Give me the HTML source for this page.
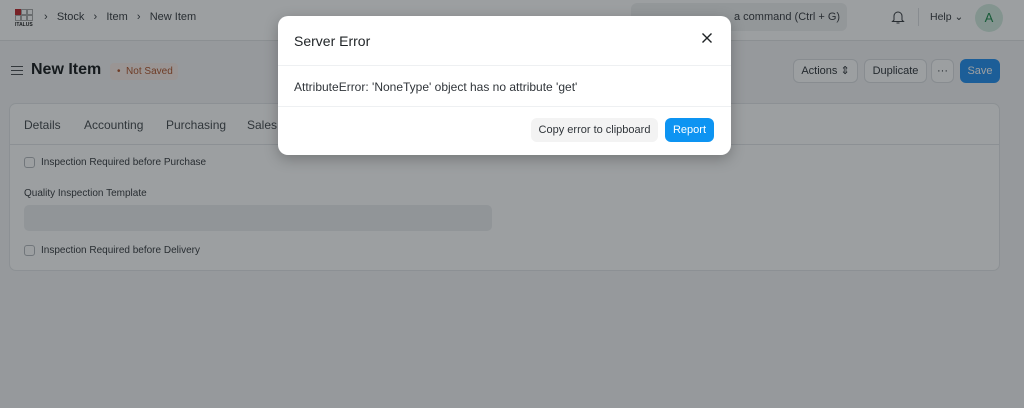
<!DOCTYPE html>
<html><head><meta charset="utf-8"><style>
*{box-sizing:border-box;margin:0;padding:0}
html,body{width:1024px;height:408px;overflow:hidden}
body{background:#f4f5f6;font-family:"Liberation Sans",sans-serif;position:relative;color:#1f2326}
.nav{position:absolute;left:0;top:0;width:1024px;height:41px;border-bottom:1px solid #e2e4e6;background:#fff}
.abs{position:absolute;white-space:nowrap}
.crumb{font-size:11px;color:#383c40;top:11px}
.search{left:631px;top:3px;width:216px;height:28px;background:#f0f1f2;border-radius:6px}
.btn{position:absolute;top:59px;height:24px;border:1px solid #dcdfe2;border-radius:6px;background:#fff;font-size:11px;color:#30353a;text-align:center;line-height:22px}
.card{position:absolute;left:9px;top:103px;width:991px;height:168px;background:#fff;border:1px solid #e4e6e8;border-radius:7px}
.tab{font-size:12px;color:#454a4f;top:118px}
.cb{position:absolute;width:11px;height:11px;border:1px solid #b5b9bd;border-radius:3px}
.lbl{font-size:10px;color:#383c40}
.ov{position:absolute;left:0;top:0;width:1024px;height:408px;background:rgba(20,26,32,0.42)}
.modal{position:absolute;left:278px;top:16px;width:453px;height:139px;background:#fff;border-radius:10px;box-shadow:0 4px 14px rgba(0,0,0,.25)}
</style></head><body>
<div class="nav"></div>
<div class="abs" style="left:15px;top:9px;width:18px;height:12px;display:grid;grid-template-columns:6px 6px 6px;grid-template-rows:6px 6px;">
<div style="background:#c0262b"></div><div style="border:1px solid #aaa"></div><div style="border:1px solid #aaa"></div><div style="border:1px solid #aaa"></div><div style="border:1px solid #aaa"></div><div style="border:1px solid #aaa"></div></div>
<div class="abs" style="left:15px;top:22px;font-size:5px;font-weight:bold;color:#222">ITALUS</div>
<div class="abs crumb" style="left:44px">›&nbsp;&nbsp; Stock &nbsp;&nbsp;›&nbsp;&nbsp; Item &nbsp;&nbsp;›&nbsp;&nbsp; New Item</div>
<div class="abs search"></div>
<div class="abs" style="left:734px;top:11px;font-size:11px;color:#383c40">a command (Ctrl + G)</div>
<svg class="abs" style="left:891px;top:9px" width="14" height="16" viewBox="0 0 14 16"><path d="M3 11V7a4 4 0 0 1 8 0v4l1.5 1.5h-11z M5.5 14h3" fill="none" stroke="#383c40" stroke-width="1"/></svg>
<div class="abs" style="left:918px;top:8px;width:1px;height:18px;background:#dcdfe2"></div>
<div class="abs" style="left:930px;top:11px;font-size:10.5px;color:#383c40">Help ⌄</div>
<div class="abs" style="left:975px;top:4px;width:28px;height:28px;border-radius:50%;background:#d4ede0;color:#1d8a4c;font-size:13px;text-align:center;line-height:28px">A</div>
<div class="abs" style="left:11px;top:66px;width:12px;height:9px;border-top:1.5px solid #4a4e52;border-bottom:1.5px solid #4a4e52"><div style="margin-top:2.5px;height:1.5px;background:#4a4e52"></div></div>
<div class="abs" style="left:31px;top:61px;font-size:16px;font-weight:bold;color:#171a1d">New Item</div>
<div class="abs" style="left:110px;top:63px;width:68px;height:17px;background:#fbeee8;border-radius:4px"></div>
<div class="abs" style="left:117px;top:66px;font-size:10px;color:#b1552c">•&nbsp; Not Saved</div>
<div class="btn" style="left:793px;width:65px">Actions ⇕</div>
<div class="btn" style="left:864px;width:63px">Duplicate</div>
<div class="btn" style="left:931px;width:23px">···</div>
<div class="btn" style="left:960px;width:40px;background:#2490ef;border-color:#2490ef;color:#fff">Save</div>
<div class="card"></div>
<div class="abs" style="left:10px;top:144px;width:989px;height:1px;background:#e4e6e8"></div>
<div class="abs tab" style="left:24px">Details</div>
<div class="abs tab" style="left:84px">Accounting</div>
<div class="abs tab" style="left:166px">Purchasing</div>
<div class="abs tab" style="left:247px">Sales</div>
<div class="cb" style="left:24px;top:157px"></div>
<div class="abs lbl" style="left:41px;top:157px">Inspection Required before Purchase</div>
<div class="abs lbl" style="left:24px;top:188px">Quality Inspection Template</div>
<div class="abs" style="left:24px;top:205px;width:468px;height:26px;background:#eceef0;border-radius:5px"></div>
<div class="cb" style="left:24px;top:245px"></div>
<div class="abs lbl" style="left:41px;top:245px">Inspection Required before Delivery</div>
<div class="ov"></div>
<div class="modal">
<div class="abs" style="left:16px;top:17px;font-size:14px;color:#1f2326">Server Error</div>
<svg class="abs" style="left:423px;top:16px" width="12" height="12" viewBox="0 0 12 12"><path d="M1.5 1.5l9 9M10.5 1.5l-9 9" stroke="#1f2326" stroke-width="1.4"/></svg>
<div class="abs" style="left:0;top:49px;width:453px;height:1px;background:#eef0f2"></div>
<div class="abs" style="left:16px;top:64px;font-size:12px;color:#30353a">AttributeError: 'NoneType' object has no attribute 'get'</div>
<div class="abs" style="left:0;top:90px;width:453px;height:1px;background:#eef0f2"></div>
<div class="abs" style="left:253px;top:102px;width:127px;height:24px;background:#f3f3f3;border-radius:6px;font-size:11px;color:#30353a;text-align:center;line-height:24px">Copy error to clipboard</div>
<div class="abs" style="left:387px;top:102px;width:49px;height:24px;background:#0d94f2;border-radius:6px;font-size:11px;color:#fff;text-align:center;line-height:24px">Report</div>
</div>
</body></html>
